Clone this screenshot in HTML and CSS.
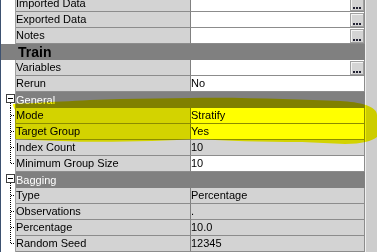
FILE: index.html
```html
<!DOCTYPE html>
<html lang="en">
<head>
<meta charset="UTF-8">
<meta name="viewport" content="width=device-width, initial-scale=1.0">
<title>Properties</title>
<link rel="stylesheet" href="styles.css">
</head>
<body>

<div class="page">
  <div class="grid">

    <div class="row">
      <div class="gutter"></div>
      <div class="label">Imported Data</div>
      <div class="value"><span class="text"></span><span class="btn"><svg width="12" height="12" viewBox="0 0 12 12"><rect x="2" y="9" width="2" height="2" fill="#223"/><rect x="5" y="9" width="2" height="2" fill="#223"/><rect x="8" y="9" width="2" height="2" fill="#223"/></svg></span></div>
    </div>
    <div class="row">
      <div class="gutter"></div>
      <div class="label">Exported Data</div>
      <div class="value"><span class="text"></span><span class="btn"><svg width="12" height="12" viewBox="0 0 12 12"><rect x="2" y="9" width="2" height="2" fill="#223"/><rect x="5" y="9" width="2" height="2" fill="#223"/><rect x="8" y="9" width="2" height="2" fill="#223"/></svg></span></div>
    </div>
    <div class="row">
      <div class="gutter"></div>
      <div class="label">Notes</div>
      <div class="value"><span class="text"></span><span class="btn"><svg width="12" height="12" viewBox="0 0 12 12"><rect x="2" y="9" width="2" height="2" fill="#223"/><rect x="5" y="9" width="2" height="2" fill="#223"/><rect x="8" y="9" width="2" height="2" fill="#223"/></svg></span></div>
    </div>

    <div class="row">
      <div class="category">Train</div>
    </div>

    <div class="row">
      <div class="gutter"></div>
      <div class="label">Variables</div>
      <div class="value"><span class="text"></span><span class="btn"><svg width="12" height="12" viewBox="0 0 12 12"><rect x="2" y="9" width="2" height="2" fill="#223"/><rect x="5" y="9" width="2" height="2" fill="#223"/><rect x="8" y="9" width="2" height="2" fill="#223"/></svg></span></div>
    </div>
    <div class="row">
      <div class="gutter"></div>
      <div class="label">Rerun</div>
      <div class="value"><span class="text">No</span></div>
    </div>

    <div class="row">
      <div class="gutter open"><span class="toggle"></span></div>
      <div class="group">General</div>
    </div>
    <div class="row">
      <div class="gutter tree"></div>
      <div class="label">Mode</div>
      <div class="value"><span class="text">Stratify</span></div>
    </div>
    <div class="row">
      <div class="gutter tree"></div>
      <div class="label">Target Group</div>
      <div class="value"><span class="text">Yes</span></div>
    </div>
    <div class="row">
      <div class="gutter tree"></div>
      <div class="label">Index Count</div>
      <div class="value locked"><span class="text">10</span></div>
    </div>
    <div class="row">
      <div class="gutter tree last"></div>
      <div class="label">Minimum Group Size</div>
      <div class="value"><span class="text">10</span></div>
    </div>

    <div class="row">
      <div class="gutter open"><span class="toggle"></span></div>
      <div class="group">Bagging</div>
    </div>
    <div class="row">
      <div class="gutter tree"></div>
      <div class="label">Type</div>
      <div class="value locked"><span class="text">Percentage</span></div>
    </div>
    <div class="row">
      <div class="gutter tree"></div>
      <div class="label">Observations</div>
      <div class="value locked"><span class="text">.</span></div>
    </div>
    <div class="row">
      <div class="gutter tree"></div>
      <div class="label">Percentage</div>
      <div class="value locked"><span class="text">10.0</span></div>
    </div>
    <div class="row">
      <div class="gutter tree last"></div>
      <div class="label">Random Seed</div>
      <div class="value locked"><span class="text">12345</span></div>
    </div>

  </div>
  <div class="scrollbar"></div>

  <!-- highlighter stroke over Mode / Target Group -->
  <svg class="marker" width="377" height="252" viewBox="0 0 377 252">
    <path d="M13 104 C40 103 80 100 120 99 L190 98 C250 97 300 100 340 101 C360 102 377 106 377 115 L377 137 C372 141 362 144 345 144 L302 142 C260 142 225 141 200 139 C160 141 100 143 60 141 C40 140 25 140 15 139 L15 110 C14 108 13 106 13 104 Z" fill="#ffff00"/>
  </svg>
</div>

</body>
</html>
```

FILE: styles.css
```css
body {
  margin: 0;
  overflow: hidden;
  font-family: "Liberation Sans", Arial, sans-serif;
  font-size: 11px;
  color: #000;
  background-color: #fff;
}

.page {
  position: relative;
  display: flex;
  width: 377px;
  height: 252px;
  overflow: hidden;
}

.grid {
  width: 364px;
  margin-top: -4px;
  border-left: 1px solid #3d5170;
}

.row {
  display: grid;
  grid-template-columns: 15px 175px 174px;
  height: 16px;
}

.gutter {
  box-sizing: border-box;
  background-color: #fff;
  border-right: 1px solid #a0a0a0;
}

.label,
.value {
  box-sizing: border-box;
  height: 16px;
  line-height: 15px;
  border-bottom: 1px solid #8c8c8c;
  white-space: nowrap;
  overflow: hidden;
}

.label {
  background-color: #d3d3d3;
  border-right: 1px solid #808080;
}

.value {
  display: flex;
  justify-content: space-between;
  background-color: #fff;
  border-right: 1px solid #8c8c8c;
}

.value.locked {
  background-color: #d3d3d3;
}

.btn {
  box-sizing: border-box;
  align-self: flex-end;
  width: 14px;
  height: 14px;
  background-color: #d4d4d4;
  border: 1px solid #a0a0a0;
  box-shadow: inset 1px 1px #f4f4f4;
}

.btn svg {
  display: block;
}

.category {
  grid-column: 1 / -1;
  background-color: #808080;
  font-size: 14px;
  font-weight: bold;
  line-height: 16px;
  padding-left: 17px;
}

.group {
  grid-column: 2 / -1;
  background-color: #808080;
  color: #fff;
  line-height: 16px;
  border-right: 1px solid #808080;
}

.gutter.open {
  padding: 2px 0 0 5px;
  background-image: repeating-linear-gradient(to bottom, #000 0 1px, transparent 1px 2px);
  background-size: 1px 5px;
  background-position: 9px 11px;
  background-repeat: no-repeat;
}

.toggle {
  display: block;
  box-sizing: border-box;
  width: 9px;
  height: 9px;
  border: 1px solid #404040;
  background: linear-gradient(#000, #000) center / 5px 1px no-repeat, #fff;
}

.gutter.tree {
  background-image:
    repeating-linear-gradient(to bottom, #000 0 1px, transparent 1px 2px),
    repeating-linear-gradient(to right, #000 0 1px, transparent 1px 2px);
  background-size: 1px 16px, 5px 1px;
  background-position: 9px 0, 10px 7px;
  background-repeat: no-repeat;
}

.gutter.tree.last {
  background-size: 1px 8px, 5px 1px;
}

.scrollbar {
  box-sizing: border-box;
  width: 12px;
  background-color: #cdcdcd;
  border-left: 1px solid #f0f0f0;
}

.marker {
  position: absolute;
  top: 0;
  left: 0;
  pointer-events: none;
  mix-blend-mode: multiply;
}
```
